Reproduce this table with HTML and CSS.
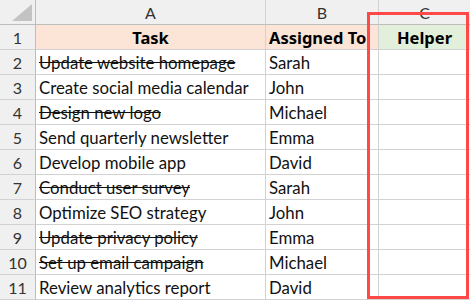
FILE: index.html
```html
<!DOCTYPE html>
<html>
<head>
<meta charset="utf-8">
<link rel="stylesheet" href="styles.css">
</head>
<body>
<div class="sheet">
  <div class="grid">
    <div class="corner"><span class="tri"></span></div>
    <div class="colhead">A</div>
    <div class="colhead">B</div>
    <div class="colhead">C</div>

    <div class="rowhead">1</div>
    <div class="cell hdr peach center">Task</div>
    <div class="cell hdr peach">Assigned To</div>
    <div class="cell hdr green center">Helper</div>

    <div class="rowhead">2</div>
    <div class="cell done">Update website homepage</div>
    <div class="cell">Sarah</div>
    <div class="cell"></div>

    <div class="rowhead">3</div>
    <div class="cell">Create social media calendar</div>
    <div class="cell">John</div>
    <div class="cell"></div>

    <div class="rowhead">4</div>
    <div class="cell done">Design new logo</div>
    <div class="cell">Michael</div>
    <div class="cell"></div>

    <div class="rowhead">5</div>
    <div class="cell">Send quarterly newsletter</div>
    <div class="cell">Emma</div>
    <div class="cell"></div>

    <div class="rowhead">6</div>
    <div class="cell">Develop mobile app</div>
    <div class="cell">David</div>
    <div class="cell"></div>

    <div class="rowhead">7</div>
    <div class="cell done">Conduct user survey</div>
    <div class="cell">Sarah</div>
    <div class="cell"></div>

    <div class="rowhead">8</div>
    <div class="cell">Optimize SEO strategy</div>
    <div class="cell">John</div>
    <div class="cell"></div>

    <div class="rowhead">9</div>
    <div class="cell done">Update privacy policy</div>
    <div class="cell">Emma</div>
    <div class="cell"></div>

    <div class="rowhead">10</div>
    <div class="cell done">Set up email campaign</div>
    <div class="cell">Michael</div>
    <div class="cell"></div>

    <div class="rowhead">11</div>
    <div class="cell">Review analytics report</div>
    <div class="cell">David</div>
    <div class="cell"></div>
  </div>
  <div class="highlight"></div>
</div>
</body>
</html>
```

FILE: styles.css
```css
html, body {
  margin: 0;
  padding: 0;
  background: #ffffff;
  overflow: hidden;
}

.sheet {
  position: relative;
  width: 470px;
  height: 300px;
  overflow: hidden;
  font-family: Lato, "Noto Sans", sans-serif;
  font-size: 16.8px;
  color: #111111;
}

.grid {
  display: grid;
  grid-template-columns: 36px 230px 113px 92px;
  grid-template-rows: repeat(12, 25px);
}

.grid > div {
  box-sizing: border-box;
  border-right: 1px solid #d2d2d2;
  border-bottom: 1px solid #d2d2d2;
  display: flex;
  align-items: center;
  white-space: nowrap;
  overflow: hidden;
}

.corner {
  background: #f0f0f0;
  position: relative;
  border-right-color: #bdbdbd !important;
  border-bottom-color: #bdbdbd !important;
}

.tri {
  position: absolute;
  right: 3px;
  bottom: 3px;
  width: 0;
  height: 0;
  border-left: 20px solid transparent;
  border-bottom: 17px solid #c3c3c3;
}

.colhead {
  background: #f0f0f0;
  justify-content: center;
  color: #333333;
  border-bottom-color: #bdbdbd !important;
  padding-top: 1px;
  font-size: 16px;
}

.rowhead {
  background: #f0f0f0;
  justify-content: center;
  color: #333333;
  border-right-color: #bdbdbd !important;
  font-size: 16px;
}

.cell {
  padding-left: 3px;
}

.center {
  justify-content: center;
  padding-left: 0;
}

.hdr {
  font-family: "Noto Sans", Lato, sans-serif;
  font-size: 16.5px;
  font-weight: 700;
  color: #000000;
}

.peach {
  background: #fce4d6;
}

.green {
  background: #e2efda;
}

.done {
  text-decoration: line-through;
}

.highlight {
  position: absolute;
  left: 367px;
  top: 12px;
  width: 102px;
  height: 287px;
  box-sizing: border-box;
  border: 3px solid #ff4848;
}
```
